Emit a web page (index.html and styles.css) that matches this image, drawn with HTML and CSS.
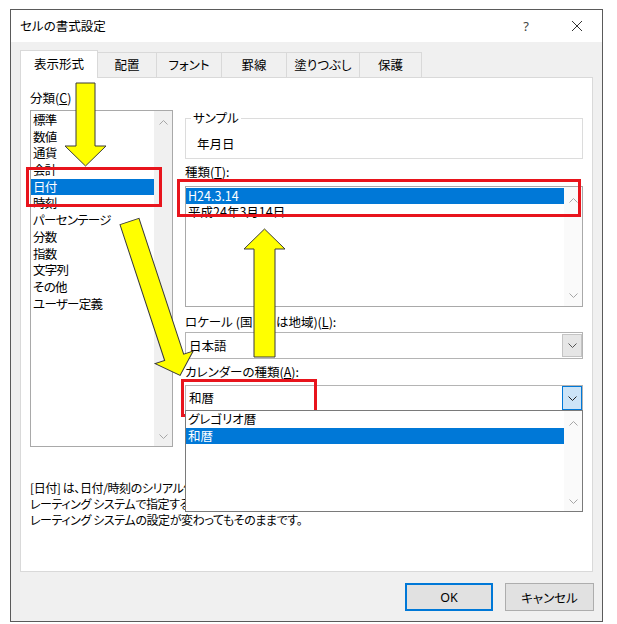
FILE: index.html
```html
<!DOCTYPE html>
<html lang="ja">
<head>
    <meta charset="UTF-8">
    <title>セルの書式設定</title>
    <link rel="stylesheet" href="styles.css">
</head>
<body>
    <div class="dialog">
        <div class="titlebar">
            <span class="title">セルの書式設定</span>
            <span class="help">?</span>
            <span class="close">
                <svg width="12" height="12" viewBox="0 0 12 12"><path d="M1 1L11 11M11 1L1 11" stroke="#333" stroke-width="1"/></svg>
            </span>
        </div>

        <div class="body">
            <div class="tabs">
                <div class="tab active" style="width:78px">表示形式</div>
                <div class="tab" style="width:60px">配置</div>
                <div class="tab" style="width:66px">フォント</div>
                <div class="tab" style="width:66px">罫線</div>
                <div class="tab" style="width:74px">塗りつぶし</div>
                <div class="tab" style="width:63px">保護</div>
            </div>

            <div class="panel">
                <div class="cols">
                    <div class="col-left">
                        <div class="label">分類(<u>C</u>)</div>
                        <div class="listbox category">
                            <ul class="items">
                                <li>標準</li>
                                <li>数値</li>
                                <li>通貨</li>
                                <li>会計</li>
                                <li class="selected">日付</li>
                                <li>時刻</li>
                                <li>パーセンテージ</li>
                                <li>分数</li>
                                <li>指数</li>
                                <li>文字列</li>
                                <li>その他</li>
                                <li>ユーザー定義</li>
                            </ul>
                            <div class="vscroll">
                                <svg class="chev" width="9" height="5" viewBox="0 0 9 5"><polyline points="0.5,4.5 4.5,0.5 8.5,4.5"/></svg>
                                <svg class="chev" width="9" height="5" viewBox="0 0 9 5"><polyline points="0.5,0.5 4.5,4.5 8.5,0.5"/></svg>
                            </div>
                        </div>
                    </div>

                    <div class="col-right">
                        <fieldset class="sample">
                            <legend>サンプル</legend>
                            <div class="sample-value">年月日</div>
                        </fieldset>

                        <div class="label gap-types">種類(<u>T</u>):</div>
                        <div class="listbox types">
                            <ul class="items">
                                <li class="selected">H24.3.14</li>
                                <li>平成24年3月14日</li>
                            </ul>
                            <div class="vscroll">
                                <svg class="chev" width="9" height="5" viewBox="0 0 9 5"><polyline points="0.5,4.5 4.5,0.5 8.5,4.5"/></svg>
                                <svg class="chev" width="9" height="5" viewBox="0 0 9 5"><polyline points="0.5,0.5 4.5,4.5 8.5,0.5"/></svg>
                            </div>
                        </div>

                        <div class="label gap-locale">ロケール (国または地域)(<u>L</u>):</div>
                        <div class="combo locale">
                            <span class="combo-text">日本語</span>
                            <span class="combo-btn">
                                <svg width="9" height="5" viewBox="0 0 9 5"><polyline points="0.5,0.5 4.5,4.5 8.5,0.5"/></svg>
                            </span>
                        </div>

                        <div class="label gap-calendar">カレンダーの種類(<u>A</u>):</div>
                        <div class="combo calendar open">
                            <span class="combo-text">和暦</span>
                            <span class="combo-btn">
                                <svg width="9" height="5" viewBox="0 0 9 5"><polyline points="0.5,0.5 4.5,4.5 8.5,0.5"/></svg>
                            </span>
                            <div class="dropdown">
                                <ul class="items">
                                    <li>グレゴリオ暦</li>
                                    <li class="selected">和暦</li>
                                </ul>
                                <div class="vscroll">
                                    <svg class="chev" width="9" height="5" viewBox="0 0 9 5"><polyline points="0.5,4.5 4.5,0.5 8.5,4.5"/></svg>
                                    <svg class="chev" width="9" height="5" viewBox="0 0 9 5"><polyline points="0.5,0.5 4.5,4.5 8.5,0.5"/></svg>
                                </div>
                            </div>
                        </div>
                    </div>
                </div>

                <div class="desc">
                    <div class="line">[日付] は、日付/時刻のシリアル値を日付値として表示します。アスタリスク (*) で始まる日付書式は、オペ</div>
                    <div class="line">レーティング システムで指定する地域の日付/時刻の設定の変更に対応します。アスタリスクのない書式は、オペ</div>
                    <div class="line">レーティング システムの設定が変わってもそのままです。</div>
                </div>
            </div>

            <div class="buttons">
                <button class="btn ok">OK</button>
                <button class="btn cancel">キャンセル</button>
            </div>
        </div>
    </div>

    <!-- annotation layer: red frames and yellow arrows -->
    <svg class="marks" width="617" height="624" viewBox="0 0 617 624">
        <g class="frame">
            <rect x="24.5" y="51.5" width="71" height="22"/>
            <rect x="27.5" y="168.5" width="133" height="37"/>
            <rect x="178.5" y="180.5" width="401" height="35"/>
            <rect x="182.5" y="380.5" width="133" height="35"/>
        </g>
        <g class="arrow">
            <polygon points="76,83 95,83 95,146 106,146 85.5,166 65,146 76,146"/>
            <polygon transform="translate(129.5 221.5) rotate(-18.2)" points="-10,0 10,0 10,143 20,143 0,162 -20,143 -10,143"/>
            <polygon points="254,357 275,357 275,249 285,249 264.5,229 244,249 254,249"/>
        </g>
    </svg>
</body>
</html>
```

FILE: styles.css
```css
* {
    margin: 0;
    padding: 0;
    box-sizing: border-box;
}

body {
    position: relative;
    width: 617px;
    height: 624px;
    background: #fff;
    font-family: "Noto Sans CJK JP", "Noto Sans", sans-serif;
    font-size: 12.5px;
    font-feature-settings: "palt";
    color: #000;
    overflow: hidden;
}

u {
    text-decoration: underline;
    text-underline-offset: 1px;
}

.dialog {
    margin: 9px 0 0 10px;
    width: 593px;
    height: 613px;
    border: 1px solid #5a5a5a;
    background: #f0f0f0;
    display: flex;
    flex-direction: column;
}

/* title bar */
.titlebar {
    height: 32px;
    background: #fff;
    display: flex;
    align-items: center;
    padding-left: 9px;
}

.title {
    flex: 1;
    line-height: 16px;
}

.help {
    width: 20px;
    text-align: center;
    color: #444;
    font-family: "Noto Sans", sans-serif;
    font-size: 13px;
    margin-right: 35px;
}

.close {
    width: 12px;
    height: 12px;
    margin-right: 19px;
    display: flex;
}

.body {
    flex: 1;
    padding: 10px 9px 9px;
    display: flex;
    flex-direction: column;
}

/* tabs */
.tabs {
    display: flex;
    align-items: flex-end;
    height: 25px;
}

.tab {
    height: 25px;
    line-height: 24px;
    text-align: center;
    border: 1px solid #d9d9d9;
    border-bottom: none;
    margin-left: -1px;
    background: #f0f0f0;
}

.tab:first-child {
    margin-left: 0;
}

.tab.active {
    height: 28px;
    line-height: 26px;
    margin-bottom: -1px;
    background: #fff;
    position: relative;
    z-index: 1;
}

/* tab page */
.panel {
    height: 495px;
    background: #fff;
    border: 1px solid #d9d9d9;
    padding: 12px 0 0 9px;
}

.cols {
    display: flex;
    gap: 12px;
}

.col-left {
    width: 143px;
}

.col-right {
    width: 398px;
    padding-top: 20px;
}

.label {
    line-height: 16px;
    white-space: nowrap;
}

.listbox {
    display: flex;
    border: 1px solid #a9a9a9;
    background: #fff;
}

.items {
    list-style: none;
    flex: 1;
    white-space: nowrap;
    overflow: hidden;
}

.items li {
    padding-left: 2px;
}

.items li.selected {
    background: #0078d7;
    color: #fff;
}

.vscroll {
    width: 18px;
    background: #f0f0f0;
    display: flex;
    flex-direction: column;
    justify-content: space-between;
    align-items: center;
}

.chev polyline {
    fill: none;
    stroke: #a6a6a6;
    stroke-width: 1;
}

.category {
    margin-top: 4px;
    height: 337px;
}

.category .items {
    padding-top: 1px;
    letter-spacing: -0.7px;
}

.category .items li {
    height: 16.7px;
    line-height: 16.7px;
}

.category .vscroll {
    padding: 9px 0 7px;
}

/* sample group */
.sample {
    border: 1px solid #dcdcdc;
    padding: 10px 11px 6px;
    min-width: 0;
}

.sample legend {
    margin-left: -6px;
    padding: 0 2px;
    line-height: 16px;
}

.sample-value {
    line-height: 16px;
}

.gap-types {
    margin-top: 5px;
}

.types {
    margin-top: 6px;
    height: 121px;
}

.types .items {
    padding-top: 1px;
}

.types .items li {
    height: 16px;
    line-height: 16px;
}

.types .vscroll {
    padding: 11px 0 8px;
    background: #fafafa;
}

.gap-locale {
    margin-top: 7px;
}

.gap-calendar {
    margin-top: 5px;
}

/* combo boxes */
.combo {
    position: relative;
    display: flex;
    align-items: center;
    border: 1px solid #b4b4b4;
    background: #fff;
}

.combo-text {
    flex: 1;
    padding-left: 3px;
    line-height: 16px;
}

.combo-btn {
    width: 20px;
    align-self: stretch;
    margin: 1px 0;
    display: flex;
    align-items: center;
    justify-content: center;
    background: #e6e6e6;
    border: 1px solid #c4c4c4;
}

.combo-btn polyline {
    fill: none;
    stroke: #555;
    stroke-width: 1;
}

.locale {
    margin-top: 2px;
    height: 27px;
}

.calendar {
    margin-top: 5px;
    height: 26px;
}

.calendar .combo-btn {
    margin: 0;
    background: #cce4f7;
    border-color: #0078d7;
}

.calendar .combo-btn polyline {
    stroke: #222;
}

/* open drop-down list of the calendar combo */
.dropdown {
    position: absolute;
    left: -1px;
    right: -1px;
    top: 100%;
    height: 102px;
    display: flex;
    border: 1px solid #7a7a7a;
    background: #fff;
    z-index: 2;
}

.dropdown .items li {
    height: 16px;
    line-height: 16px;
}

.dropdown .items li:first-child {
    height: 17px;
    line-height: 15px;
}

.dropdown .vscroll {
    background: #fafafa;
    padding: 10px 0 7px;
}

/* description */
.desc {
    margin-top: 33px;
    width: 550px;
    font-size: 12px;
    letter-spacing: -0.4px;
}

.desc .line {
    line-height: 16px;
    white-space: nowrap;
    overflow: hidden;
}

/* OK / cancel */
.buttons {
    margin-top: 11px;
    margin-right: -1px;
    display: flex;
    justify-content: flex-end;
    gap: 12px;
}

.btn {
    height: 28px;
    font: inherit;
    background: #e1e1e1;
    border: 1px solid #adadad;
    color: #000;
}

.ok {
    width: 88px;
    border-color: #0078d7;
    box-shadow: inset 0 0 0 1px #0078d7;
    font-family: "Noto Sans", sans-serif;
}

.cancel {
    width: 89px;
}

/* annotations */
.marks {
    position: absolute;
    left: 0;
    top: 0;
    pointer-events: none;
}

.frame rect {
    fill: none;
    stroke: #e8141c;
    stroke-width: 3;
}

.arrow polygon {
    fill: #ffff00;
    stroke: #3a3a3a;
    stroke-width: 1;
}
```
